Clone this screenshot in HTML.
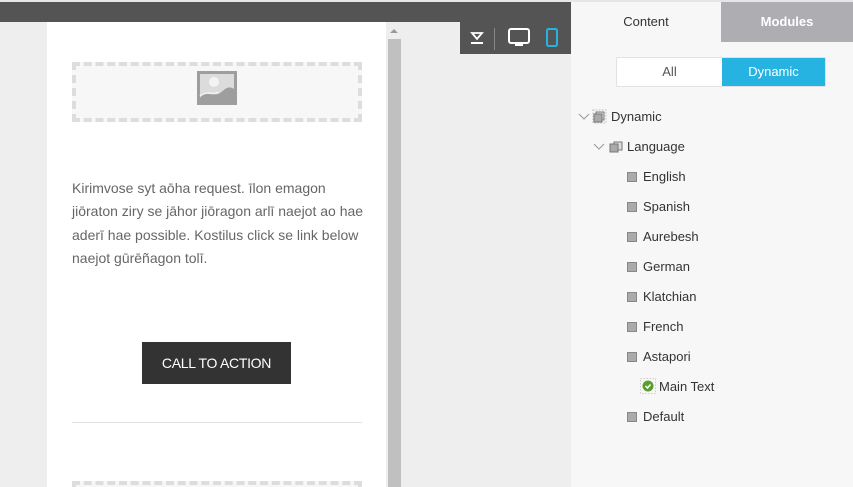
<!DOCTYPE html>
<html style="overflow:hidden;width:853px;height:487px"><head><style>
*{margin:0;padding:0;box-sizing:border-box}
body{width:853px;height:487px;overflow:hidden;position:relative;background:#eeeeee;font-family:"Liberation Sans","DejaVu Sans",sans-serif}
.a{position:absolute}
.t{font-size:13px;color:#333;position:absolute}
.sq{position:absolute;width:10px;height:10px;background:#aaa;border:1px solid #888}
</style></head><body>
<div class="a" style="left:0;top:0;width:853px;height:2px;background:#e6e6ea"></div>
<div class="a" style="left:0;top:2px;width:571px;height:20px;background:#545454"></div>
<div class="a" style="left:460px;top:22px;width:111px;height:32px;background:#545454"></div>
<svg class="a" style="left:468px;top:28px" width="100" height="22">
<path d="M4 5h10l-5 6z" fill="none" stroke="#fff" stroke-width="1.8"/>
<rect x="3" y="14" width="12" height="2" fill="#fff"/>
<rect x="26" y="0" width="1" height="22" fill="#888"/>
<rect x="41" y="1" width="20" height="14" rx="2" fill="none" stroke="#fff" stroke-width="2"/>
<path d="M47 18h8v-2h-8z" fill="#fff"/>
<rect x="79" y="1" width="10" height="17" rx="1.5" fill="none" stroke="#27b3e2" stroke-width="2"/>
</svg>
<div class="a" style="left:47px;top:22px;width:339px;height:465px;background:#fff"></div>
<div class="a" style="left:387px;top:22px;width:14px;height:465px;background:#eeeeee"></div>
<div class="a" style="left:388px;top:39px;width:13px;height:448px;background:#c0c0c0"></div>
<div class="a" style="left:390px;top:29px;width:0;height:0;border-left:4px solid transparent;border-right:4px solid transparent;border-bottom:4px solid #999"></div>
<div class="a" style="left:72px;top:62px;width:290px;height:60px;background:#f7f7f8;border:4px dashed #dddddd"></div>
<svg class="a" style="left:197px;top:71px" width="40" height="34">
<rect x="0" y="0" width="40" height="34" fill="#9e9e9e"/>
<rect x="3" y="3" width="34" height="28" fill="#dcdcdc"/>
<circle cx="17" cy="11" r="5" fill="#f3f3f3"/>
<path d="M3 27c6-10 12-2 18-4s8-10 16-5v13H3z" fill="#9e9e9e"/>
<path d="M3 25c8-6 12 0 18-4" stroke="#f3f3f3" stroke-width="1.5" fill="none"/>
</svg>
<div class="a" style="left:72px;top:177px;width:300px;font-size:14px;line-height:23.3px;color:#666">Kirimvose syt aōha request. īlon emagon jiōraton ziry se jāhor jiōragon arlī naejot ao hae aderī hae possible. Kostilus click se link below naejot gūrēñagon tolī.</div>
<div class="a" style="left:142px;top:342px;width:149px;height:42px;background:#333;color:#fff;font-size:14px;text-align:center;line-height:42px;letter-spacing:-0.3px">CALL TO ACTION</div>
<div class="a" style="left:72px;top:422px;width:290px;height:1px;background:#e2e2e2"></div>
<div class="a" style="left:72px;top:481px;width:290px;height:6px;border:4px dashed #dddddd;border-bottom:none;background:#f7f7f8"></div>
<div class="a" style="left:571px;top:2px;width:282px;height:485px;background:#f7f7f7"></div>
<div class="a" style="left:721px;top:2px;width:132px;height:40px;background:#aeadb2;color:#fff;font-size:13px;text-align:center;line-height:40px;font-weight:bold">Modules</div>
<div class="a" style="left:571px;top:2px;width:150px;height:40px;color:#333;font-size:13px;text-align:center;line-height:40px">Content</div>
<div class="a" style="left:616px;top:57px;width:210px;height:30px;border:1px solid #e2e2e2;background:#fff;border-radius:2px"></div>
<div class="a" style="left:617px;top:58px;width:105px;height:28px;color:#555;font-size:13px;text-align:center;line-height:28px">All</div>
<div class="a" style="left:722px;top:58px;width:103px;height:28px;background:#27b3e2;color:#fff;font-size:13px;text-align:center;line-height:28px">Dynamic</div>
<svg class="a" style="left:578px;top:108px" width="60" height="50">
<path d="M1 6l5 5 5-5" stroke="#999" fill="none"/>
<rect x="15" y="2" width="13" height="13" fill="none" stroke="#bbb" stroke-dasharray="1.5 1.5"/>
<rect x="18" y="4" width="8" height="8" fill="#ddd" stroke="#777"/>
<rect x="16" y="6" width="8" height="8" fill="#aaa" stroke="#777"/>
<path d="M16 36l5 5 5-5" stroke="#999" fill="none"/>
<rect x="36" y="34" width="8" height="8" fill="#ddd" stroke="#777"/>
<rect x="32" y="36" width="8" height="8" fill="#aaa" stroke="#777"/>
</svg>
<div class="t" style="left:611px;top:109px">Dynamic</div>
<div class="t" style="left:627px;top:139px">Language</div>
<div class="sq" style="left:627px;top:172px"></div><div class="t" style="left:643px;top:169px">English</div>
<div class="sq" style="left:627px;top:202px"></div><div class="t" style="left:643px;top:199px">Spanish</div>
<div class="sq" style="left:627px;top:232px"></div><div class="t" style="left:643px;top:229px">Aurebesh</div>
<div class="sq" style="left:627px;top:262px"></div><div class="t" style="left:643px;top:259px">German</div>
<div class="sq" style="left:627px;top:292px"></div><div class="t" style="left:643px;top:289px">Klatchian</div>
<div class="sq" style="left:627px;top:322px"></div><div class="t" style="left:643px;top:319px">French</div>
<div class="sq" style="left:627px;top:352px"></div><div class="t" style="left:643px;top:349px">Astapori</div>
<svg class="a" style="left:640px;top:378px" width="16" height="16">
<rect x="0.5" y="0.5" width="15" height="15" fill="none" stroke="#ccc" stroke-dasharray="1.5 1.5"/>
<circle cx="8" cy="8" r="5.5" fill="#5a9e2f"/>
<path d="M5.5 8l2 2 3-3.5" stroke="#fff" stroke-width="1.5" fill="none"/>
</svg>
<div class="t" style="left:659px;top:379px">Main Text</div>
<div class="sq" style="left:627px;top:412px"></div><div class="t" style="left:643px;top:409px">Default</div>
</body></html>
